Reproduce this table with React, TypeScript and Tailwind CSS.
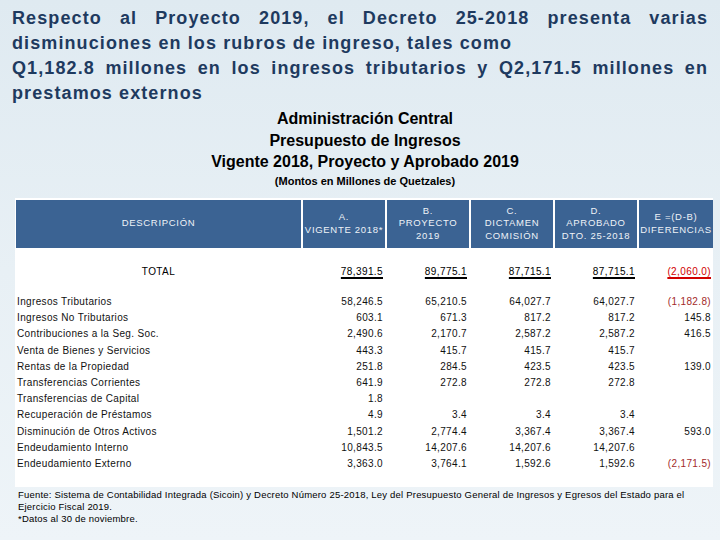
import type { FC } from 'react';

type Row = {
  label: string;
  a: string;
  b: string;
  c: string;
  d: string;
  e: string;
  neg?: boolean;
};

const rows: Row[] = [
  { label: 'Ingresos Tributarios', a: '58,246.5', b: '65,210.5', c: '64,027.7', d: '64,027.7', e: '(1,182.8)', neg: true },
  { label: 'Ingresos No Tributarios', a: '603.1', b: '671.3', c: '817.2', d: '817.2', e: '145.8' },
  { label: 'Contribuciones a la Seg. Soc.', a: '2,490.6', b: '2,170.7', c: '2,587.2', d: '2,587.2', e: '416.5' },
  { label: 'Venta de Bienes y Servicios', a: '443.3', b: '415.7', c: '415.7', d: '415.7', e: '' },
  { label: 'Rentas de la Propiedad', a: '251.8', b: '284.5', c: '423.5', d: '423.5', e: '139.0' },
  { label: 'Transferencias Corrientes', a: '641.9', b: '272.8', c: '272.8', d: '272.8', e: '' },
  { label: 'Transferencias de Capital', a: '1.8', b: '', c: '', d: '', e: '' },
  { label: 'Recuperación de Préstamos', a: '4.9', b: '3.4', c: '3.4', d: '3.4', e: '' },
  { label: 'Disminución de Otros Activos', a: '1,501.2', b: '2,774.4', c: '3,367.4', d: '3,367.4', e: '593.0' },
  { label: 'Endeudamiento Interno', a: '10,843.5', b: '14,207.6', c: '14,207.6', d: '14,207.6', e: '' },
  { label: 'Endeudamiento Externo', a: '3,363.0', b: '3,764.1', c: '1,592.6', d: '1,592.6', e: '(2,171.5)', neg: true },
];

const totals = ['78,391.5', '89,775.1', '87,715.1', '87,715.1'];

const cols = 'grid grid-cols-[285px_82px_82px_82px_82px_74px] gap-x-[2px]';

const headers = [
  ['A.', 'VIGENTE 2018*'],
  ['B.', 'PROYECTO', '2019'],
  ['C.', 'DICTAMEN', 'COMISIÓN'],
  ['D.', 'APROBADO', 'DTO. 25-2018'],
  ['E =(D-B)', 'DIFERENCIAS'],
];

const App: FC = () => {
  return (
    <div className="w-[720px] h-[540px] overflow-hidden bg-gradient-to-b from-[#dfeaf1] via-[#e8f0f5] to-[#eef4f8] font-['Liberation_Sans',Arial,sans-serif]">
      <div className="px-[12px] pt-[6px] text-[18px] leading-[25px] font-bold text-[#1e3a5f] tracking-[1.1px] text-justify">
        <p>Respecto al Proyecto 2019, el Decreto 25-2018 presenta varias disminuciones en los rubros de ingreso, tales como</p>
        <p>Q1,182.8 millones en los ingresos tributarios y Q2,171.5 millones en prestamos externos</p>
      </div>

      <div className="mt-[2px] text-center font-bold text-black pl-[10px]">
        <p className="text-[16px] leading-[21.5px]">Administración Central</p>
        <p className="text-[16px] leading-[21.5px]">Presupuesto de Ingresos</p>
        <p className="text-[16px] leading-[21.5px]">Vigente 2018, Proyecto y Aprobado 2019</p>
        <p className="text-[11px] leading-[14px] mt-[1px]">(Montos en Millones de Quetzales)</p>
      </div>

      <div className="ml-[15px] mt-[10px] w-[698px] h-[289px] bg-white pl-[1px] pt-[2px]">
        <div className={`${cols} h-[48px] text-[9.5px] leading-[12.5px] tracking-[0.7px] text-[#eef2f7]`}>
          <div className="bg-[#3b6393] flex items-center justify-center">DESCRIPCIÓN</div>
          {headers.map((h, i) => (
            <div key={i} className="bg-[#3b6393] flex flex-col items-center justify-center text-center whitespace-nowrap">
              {h.map(line => (
                <span key={line}>{line}</span>
              ))}
            </div>
          ))}
        </div>

        <div className={`${cols} mt-[16px] h-[16px] items-center text-[10px] tracking-[0.4px] text-black`}>
          <div className="text-center">TOTAL</div>
          {totals.map((v, i) => (
            <div key={i} className="text-right pr-[2px]">
              <span className="underline decoration-2 underline-offset-2">{v}</span>
            </div>
          ))}
          <div className="text-right pr-[2px] text-[#d10000]">
            <span className="underline decoration-2 underline-offset-2">(2,060.0)</span>
          </div>
        </div>

        <div className="mt-[14px] text-[10px] tracking-[0.35px] text-[#111]">
          {rows.map(r => (
            <div key={r.label} className={`${cols} h-[16.2px] items-center`}>
              <div className="pl-[1px]">{r.label}</div>
              <div className="text-right pr-[2px]">{r.a}</div>
              <div className="text-right pr-[2px]">{r.b}</div>
              <div className="text-right pr-[2px]">{r.c}</div>
              <div className="text-right pr-[2px]">{r.d}</div>
              <div className={`text-right pr-[2px] ${r.neg ? 'text-[#a32a2a]' : ''}`}>{r.e}</div>
            </div>
          ))}
        </div>
      </div>

      <div className="pl-[18px] pt-[2px] pr-[14px] text-[9.5px] leading-[12px] text-black tracking-[0.2px]">
        <p>
          Fuente: Sistema de Contabilidad Integrada (Sicoin) y Decreto Número 25-2018, Ley del Presupuesto General de Ingresos y Egresos del Estado para el Ejercicio Fiscal 2019.
        </p>
        <p>*Datos al 30 de noviembre.</p>
      </div>
    </div>
  );
};

export default App;
